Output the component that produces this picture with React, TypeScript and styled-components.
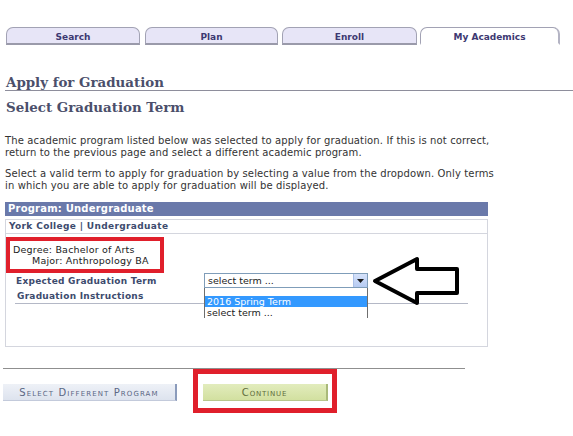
import React from "react";
import styled, { createGlobalStyle } from "styled-components";

const GlobalStyle = createGlobalStyle`
  body {
    margin: 0;
    background: #ffffff;
    font-family: "DejaVu Sans", Verdana, sans-serif;
  }
`;

const Page = styled.div`
  width: 573px;
  height: 436px;
  overflow: hidden;
`;

const TabBar = styled.div`
  display: flex;
  padding: 27px 0 0 6px;
`;

const Tab = styled.div<{ $w: number; $gap: number; $active?: boolean }>`
  box-sizing: border-box;
  width: ${(p) => p.$w}px;
  margin-right: ${(p) => p.$gap}px;
  height: 18px;
  padding-top: 2px;
  border: 1px solid #a2a2b4;
  border-bottom: 2px solid ${(p) => (p.$active ? "#ffffff" : "#9a9aaa")};
  border-right: ${(p) => (p.$active ? "2px solid #b4b4c4" : "1px solid #a2a2b4")};
  border-radius: 7px 7px 0 0;
  background: ${(p) => (p.$active ? "#ffffff" : "#e7e5f7")};
  color: #3d3972;
  font-weight: bold;
  font-size: 9px;
  display: flex;
  align-items: center;
  justify-content: center;
`;

const Title = styled.h1<{ $top: number; $rule?: boolean }>`
  margin: ${(p) => p.$top}px 0 0 5px;
  padding-left: 1px;
  font-family: "DejaVu Serif", "Liberation Serif", serif;
  font-weight: bold;
  font-size: 13.4px;
  line-height: 15px;
  color: #4b4f6b;
  border-bottom: ${(p) => (p.$rule ? "1px solid #8e8e9c" : "none")};
`;

const Para = styled.p<{ $top: number }>`
  margin: ${(p) => p.$top}px 0 0 5px;
  width: 560px;
  font-size: 10px;
  letter-spacing: 0.13px;
  line-height: 12px;
  white-space: nowrap;
  color: #333333;
`;

const Section = styled.div`
  margin: 10px 0 0 5px;
  width: 483px;
`;

const ProgramBar = styled.div`
  height: 14px;
  background: #6a79aa;
  color: #ffffff;
  font-weight: bold;
  font-size: 10px;
  line-height: 14px;
  padding-left: 3px;
  letter-spacing: 0.2px;
`;

const Box = styled.div`
  margin-top: 3px;
  border: 1px solid #d4d6de;
  padding-bottom: 42px;
`;

const CollegeRow = styled.div`
  height: 13px;
  border-bottom: 1px solid #d4d6de;
  padding-left: 3px;
  font-weight: bold;
  font-size: 9px;
  letter-spacing: 0.35px;
  line-height: 13px;
  color: #3d4b6e;
`;

const Highlight = styled.div`
  box-sizing: border-box;
  width: 158px;
  margin-top: 3px;
  border: 4px solid #e01f2b;
  padding: 3px 0 3px 3px;
  font-size: 9.5px;
  letter-spacing: 0.2px;
  line-height: 11px;
  color: #222222;
`;

const Indent = styled.div`
  padding-left: 19px;
`;

const FieldRow = styled.div`
  display: flex;
  align-items: center;
  height: 15px;
  padding-left: 10px;
`;

const Label = styled.div<{ $w?: number }>`
  width: ${(p) => p.$w ?? 188}px;
  font-weight: bold;
  font-size: 9px;
  letter-spacing: 0.25px;
  color: #3d4b6e;
`;

const SelectWrap = styled.div`
  position: relative;
  width: 164px;
  height: 15px;
`;

const SelectBox = styled.div`
  box-sizing: border-box;
  height: 15px;
  border: 1px solid #7f9db9;
  display: flex;
  align-items: center;
  justify-content: space-between;
  padding-left: 3px;
  font-size: 9.5px;
  color: #222222;
`;

const DropButton = styled.div`
  box-sizing: border-box;
  width: 14px;
  height: 13px;
  background: linear-gradient(#d6e2fa, #b6cbf2);
  border-left: 1px solid #aac0e8;
  display: flex;
  align-items: center;
  justify-content: center;
`;

const DropList = styled.div`
  position: absolute;
  left: 0;
  top: 15px;
  width: 164px;
  box-sizing: border-box;
  border-left: 1px solid #6e6e6e;
  border-right: 1px solid #6e6e6e;
  background: #ffffff;
  font-size: 9.5px;
  z-index: 2;
`;

const Option = styled.div<{ $h: number; $selected?: boolean }>`
  height: ${(p) => p.$h}px;
  line-height: ${(p) => p.$h}px;
  padding-left: 2px;
  background: ${(p) => (p.$selected ? "#3399ff" : "#ffffff")};
  color: ${(p) => (p.$selected ? "#ffffff" : "#222222")};
`;

const Pointer = styled.svg`
  position: absolute;
  left: 166px;
  top: -18px;
`;

const InstrRow = styled.div`
  margin: 0 0 0 9px;
  width: 451px;
  height: 15px;
  padding-left: 2px;
  border-bottom: 1px solid #b4b8c6;
  display: flex;
  align-items: center;
`;

const Rule = styled.div`
  margin: 21px 0 0 3px;
  width: 462px;
  height: 1px;
  background: #8f8f8f;
`;

const ButtonRow = styled.div`
  display: flex;
  align-items: flex-start;
  padding-left: 3px;
  gap: 16px;
`;

const ActionButton = styled.div<{ $w: number; $kind: "plain" | "go" }>`
  box-sizing: border-box;
  width: ${(p) => p.$w}px;
  height: 17px;
  display: flex;
  align-items: center;
  justify-content: center;
  font-variant: small-caps;
  font-size: 10px;
  letter-spacing: ${(p) => (p.$kind === "go" ? 0.8 : 1.1)}px;
  background: ${(p) =>
    p.$kind === "go"
      ? "linear-gradient(#e2ecbd, #d2e0a0)"
      : "linear-gradient(#eef1f7, #dde3ee)"};
  color: ${(p) => (p.$kind === "go" ? "#5f6d3c" : "#5b6784")};
  border-right: 2px solid ${(p) => (p.$kind === "go" ? "#a9b97a" : "#8b9bbb")};
  border-bottom: 1px solid ${(p) => (p.$kind === "go" ? "#b8c68c" : "#c3cadb")};
`;

const PlainSpot = styled.div`
  padding-top: 15px;
`;

const RedFrame = styled.div`
  border: 5px solid #e01f2b;
  padding: 10px 4px 7px 5px;
`;

const tabs = [
  { name: "Search", w: 134, gap: 5 },
  { name: "Plan", w: 133, gap: 4 },
  { name: "Enroll", w: 135, gap: 3 },
  { name: "My Academics", w: 140, gap: 0, active: true },
];

export default function App() {
  return (
    <Page>
      <GlobalStyle />
      <TabBar>
        {tabs.map((t) => (
          <Tab key={t.name} $w={t.w} $gap={t.gap} $active={t.active}>
            {t.name}
          </Tab>
        ))}
      </TabBar>

      <Title $top={30} $rule>Apply for Graduation</Title>
      <Title $top={9}>Select Graduation Term</Title>

      <Para $top={20}>
        The academic program listed below was selected to apply for graduation. If this is not correct,
        <br />
        return to the previous page and select a different academic program.
      </Para>
      <Para $top={9}>
        Select a valid term to apply for graduation by selecting a value from the dropdown. Only terms
        <br />
        in which you are able to apply for graduation will be displayed.
      </Para>

      <Section>
        <ProgramBar>Program: Undergraduate</ProgramBar>
        <Box>
          <CollegeRow>York College | Undergraduate</CollegeRow>
          <Highlight>
            Degree: Bachelor of Arts
            <Indent>Major: Anthropology BA</Indent>
          </Highlight>
          <FieldRow>
            <Label>Expected Graduation Term</Label>
            <SelectWrap>
              <SelectBox>
                select term ...
                <DropButton>
                  <svg width="7" height="4" viewBox="0 0 7 4">
                    <path d="M0 0 L7 0 L3.5 4 Z" fill="#1a1a1a" />
                  </svg>
                </DropButton>
              </SelectBox>
              <DropList>
                <Option $h={8} />
                <Option $h={11} $selected>2016 Spring Term</Option>
                <Option $h={11}>select term ...</Option>
              </DropList>
              <Pointer width="92" height="52" viewBox="0 0 92 52">
                <path
                  d="M5 26 L47 4 L47 14 L87 14 L87 38 L47 38 L47 48 Z"
                  fill="#ffffff"
                  stroke="#000000"
                  strokeWidth="4"
                  strokeLinejoin="round"
                />
              </Pointer>
            </SelectWrap>
          </FieldRow>
          <InstrRow>
            <Label $w={300}>Graduation Instructions</Label>
          </InstrRow>
        </Box>
      </Section>

      <Rule />
      <ButtonRow>
        <PlainSpot>
          <ActionButton $w={174} $kind="plain">Select Different Program</ActionButton>
        </PlainSpot>
        <RedFrame>
          <ActionButton $w={125} $kind="go">Continue</ActionButton>
        </RedFrame>
      </ButtonRow>
    </Page>
  );
}
